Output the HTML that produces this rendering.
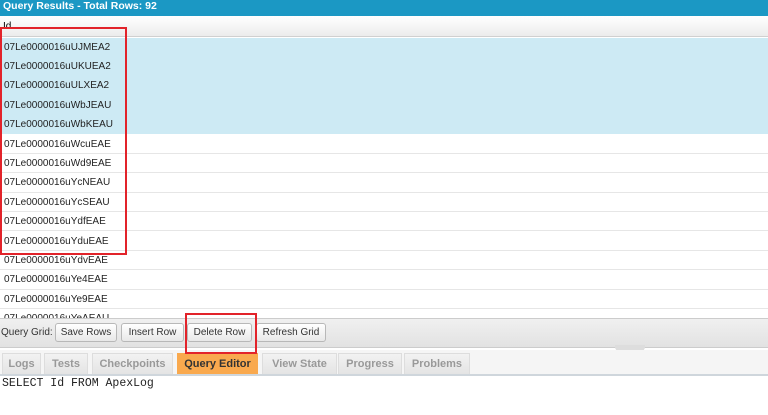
<!DOCTYPE html><html><head><style>
body{margin:0;width:768px;height:415px;overflow:hidden;font-family:"Liberation Sans",sans-serif;font-size:10px;background:#fff;position:relative}
.hd{position:absolute;left:0;top:0;width:768px;height:16px;background:#1b98c4;color:#fff;font-weight:bold;font-size:10.5px;line-height:12px;padding-left:3px;box-sizing:border-box}
.ch{position:absolute;left:0;top:16px;width:768px;height:21px;background:linear-gradient(#fff,#ececec);border-bottom:1px solid #d0d0d0;padding-left:3px;line-height:22px;box-sizing:border-box}
.r{position:absolute;left:0;width:768px;height:19.4px;line-height:20px;padding-left:4px;box-sizing:border-box;border-bottom:1px solid #e6e6e6;color:#222}
.s{background:#cdeaf4;border-bottom-color:#cdeaf4}
.tb{position:absolute;left:0;top:318px;width:768px;height:28px;background:linear-gradient(#f0f0f0,#e2e2e2);border-top:1px solid #ccc;border-bottom:1px solid #ccc}
.b{position:absolute;top:4px;height:19px;border:1px solid #b8b8b8;border-radius:3px;background:linear-gradient(#fff,#e8e8e8);line-height:18px;text-align:center;box-sizing:border-box;color:#333}
.tabs{position:absolute;left:0;top:350px;width:768px;height:24px;background:#f5f5f5;border-bottom:2px solid #cfd6dc}
.t{position:absolute;top:3px;height:21px;background:linear-gradient(#f2f2f2,#e4e4e4);border:1px solid #ddd;border-bottom:none;color:#999;font-weight:bold;font-size:11px;line-height:20px;text-align:center;box-sizing:border-box}
.red{position:absolute;border:2px solid #e2232a}
</style></head><body>
<div class="hd">Query Results - Total Rows: 92</div>
<div class="ch">Id</div>
<div class="r s" style="top:37.5px">07Le0000016uUJMEA2</div>
<div class="r s" style="top:56.9px">07Le0000016uUKUEA2</div>
<div class="r s" style="top:76.3px">07Le0000016uULXEA2</div>
<div class="r s" style="top:95.7px">07Le0000016uWbJEAU</div>
<div class="r s" style="top:115.1px">07Le0000016uWbKEAU</div>
<div class="r" style="top:134.5px">07Le0000016uWcuEAE</div>
<div class="r" style="top:153.9px">07Le0000016uWd9EAE</div>
<div class="r" style="top:173.3px">07Le0000016uYcNEAU</div>
<div class="r" style="top:192.7px">07Le0000016uYcSEAU</div>
<div class="r" style="top:212.1px">07Le0000016uYdfEAE</div>
<div class="r" style="top:231.5px">07Le0000016uYduEAE</div>
<div class="r" style="top:250.9px">07Le0000016uYdvEAE</div>
<div class="r" style="top:270.3px">07Le0000016uYe4EAE</div>
<div class="r" style="top:289.7px">07Le0000016uYe9EAE</div>
<div class="r" style="top:309.1px">07Le0000016uYeAEAU</div>
<div class="tb">
<span style="position:absolute;left:1px;top:8px;color:#333">Query Grid:</span>
<div class="b" style="left:55px;width:62px">Save Rows</div>
<div class="b" style="left:121px;width:63px">Insert Row</div>
<div class="b" style="left:187px;width:65px">Delete Row</div>
<div class="b" style="left:256px;width:70px">Refresh Grid</div>
</div>
<div style="position:absolute;left:615px;top:345px;width:30px;height:6px;background:#ddd;border-radius:0 0 4px 4px"></div>
<div class="tabs">
<div class="t" style="left:2px;width:39px">Logs</div>
<div class="t" style="left:44px;width:44px">Tests</div>
<div class="t" style="left:92px;width:81px">Checkpoints</div>
<div class="t" style="left:177px;width:81px;background:#f9a94e;color:#333;border-color:#f9a94e">Query Editor</div>
<div class="t" style="left:262px;width:75px">View State</div>
<div class="t" style="left:338px;width:64px">Progress</div>
<div class="t" style="left:404px;width:66px">Problems</div>
</div>
<div style="position:absolute;left:2px;top:377px;font-family:'Liberation Mono',monospace;font-size:11.5px;color:#222">SELECT Id FROM ApexLog</div>
<div class="red" style="left:0;top:27px;width:123px;height:224px"></div>
<div class="red" style="left:185px;top:313px;width:68px;height:37px"></div>
</body></html>
